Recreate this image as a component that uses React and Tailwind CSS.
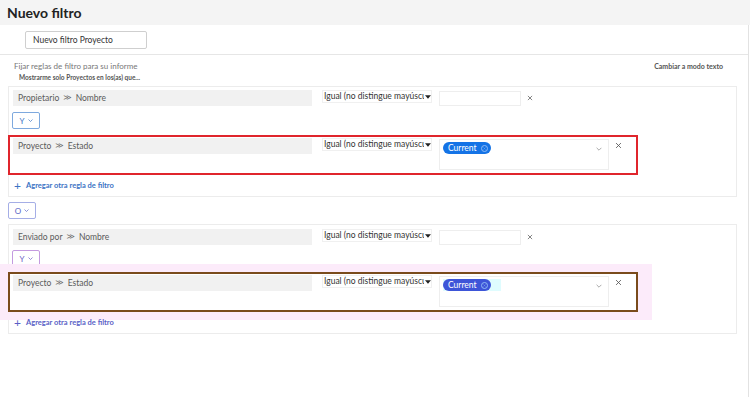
import React from 'react';

const font = { fontFamily: 'Lato, "Open Sans", "Liberation Sans", sans-serif' };

const Chevron = ({ className }) => (
    <svg viewBox="0 0 10 6" className={className} fill="none" stroke="currentColor" strokeWidth="1.4">
        <path d="M1 1l4 4 4-4" />
    </svg>
);

const Cross = ({ className }) => (
    <svg viewBox="0 0 10 10" className={className} fill="none" stroke="currentColor" strokeWidth="1.2">
        <path d="M1.5 1.5l7 7M8.5 1.5l-7 7" />
    </svg>
);

const Field = ({ left, right }) => (
    <div className="w-[299px] h-[16px] bg-[#f1f1f1] flex items-center pl-[5px] text-[8.5px] text-[#5a5a5a] shrink-0">
        <span>{left}</span>
        <span className="mx-[4px] text-[8px] leading-none text-[#666] font-['DejaVu_Sans',sans-serif]">≫</span>
        <span>{right}</span>
    </div>
);

const Operator = () => (
    <div className="ml-[10px] w-[110px] h-[13px] flex items-center bg-white border border-[#f0f0f0] text-[8.5px] text-[#333] shrink-0 pl-[1px]">
        <span className="overflow-hidden whitespace-nowrap w-[101px]">Igual (no distingue mayúsculas/minúsculas)</span>
        <svg viewBox="0 0 10 6" className="w-[6px] h-[4px] ml-[1px]" fill="#222"><path d="M0 0h10L5 6z" /></svg>
    </div>
);

const Chip = ({ tone }) => (
    <div className={`h-[12px] pl-[5px] pr-[3px] rounded-full flex items-center gap-[4px] text-white text-[8.5px] leading-none ${tone}`}>
        <span>Current</span>
        <span className="w-[7px] h-[7px] rounded-full border border-[#8fbaf5] flex items-center justify-center shrink-0">
            <Cross className="w-[3px] h-[3px] text-[#8fbaf5]" />
        </span>
    </div>
);

const SimpleRow = ({ left, right }) => (
    <div className="flex items-start pl-[4px]">
        <Field left={left} right={right} />
        <Operator />
        <div className="ml-[7px] w-[82px] h-[15px] mt-[1px] bg-white border border-[#eeeeee] shrink-0" />
        <Cross className="ml-[6px] mt-[5px] w-[6px] h-[6px] text-[#555]" />
    </div>
);

const MultiRow = ({ frame, chip, chipBg }) => (
    <div className={`-ml-[1px] w-[630px] border-2 flex items-start pl-[3px] ${frame}`}>
        <div className="pt-[1px] pb-[19px] flex items-start bg-white">
            <Field left="Proyecto" right="Estado" />
            <Operator />
        </div>
        <div className="ml-[7px] mt-[2px] mb-[2px] w-[170px] h-[31px] bg-white border border-[#eeeeee] flex items-start pt-[2px] pl-[3px] pr-[6px] shrink-0">
            <div className={`pr-[10px] ${chipBg}`}>
                <Chip tone={chip} />
            </div>
            <Chevron className="ml-auto mt-[5px] w-[6px] h-[4px] text-[#999]" />
        </div>
        <Cross className="ml-[6px] mt-[5px] w-[7px] h-[7px] text-[#555]" />
    </div>
);

const Logic = ({ label, border, text, ml }) => (
    <div className={`${ml} w-[28px] h-[17px] border rounded-[2px] flex items-center justify-center gap-[3px] text-[8px] bg-white ${border} ${text}`}>
        <span>{label}</span>
        <Chevron className="w-[5px] h-[3px]" />
    </div>
);

const AddRule = ({ color }) => (
    <div className={`flex items-center gap-[5px] pl-[5px] h-[16px] text-[7.5px] font-bold ${color}`}>
        <span className="text-[12px] font-normal leading-none">+</span>
        <span>Agregar otra regla de filtro</span>
    </div>
);

export default function App() {
    return (
        <div className="w-[750px] h-[397px] bg-white overflow-hidden" style={font}>
            <header className="h-[25px] bg-[#f4f4f4] flex items-center pl-[7px]">
                <h1 className="text-[14px] font-bold text-[#222]">Nuevo filtro</h1>
            </header>
            <div className="w-[749px] h-[372px] border-r border-[#e2e2e2]">
                <div className="h-[30px] border-b border-[#e6e6e6] pl-[25px] pt-[6px]">
                    <div className="w-[122px] h-[18px] border border-[#cfcfcf] rounded-[2px] flex items-center pl-[7px] text-[8.5px] text-[#333]">
                        Nuevo filtro Proyecto
                    </div>
                </div>
                <div className="pl-[8px] pr-[12px]">
                    <div className="flex justify-between pt-[6px]">
                        <div className="pl-[6px] text-[8px] text-[#777] leading-[10px]">Fijar reglas de filtro para su informe</div>
                        <div className="text-[7px] font-bold text-[#555] pr-[13px] leading-[10px]">Cambiar a modo texto</div>
                    </div>
                    <div className="pl-[11px] text-[6.5px] font-bold text-[#555] leading-[10px] mt-[2px]">Mostrarme solo Proyectos en los(as) que...</div>

                    <div className="mt-[3px] w-[729px] border border-[#ececec] pt-[3px] pb-[2px]">
                        <SimpleRow left="Propietario" right="Nombre" />
                        <div className="pt-[6px] pb-[6px]">
                            <Logic label="Y" ml="ml-[3px]" border="border-[#7ea9de]" text="text-[#3d74c4]" />
                        </div>
                        <MultiRow frame="border-[#e0252c]" chip="bg-[#1473e6]" chipBg="" />
                        <div className="pt-[3px]">
                            <AddRule color="text-[#3b73c4]" />
                        </div>
                    </div>

                    <div className="pt-[5px] pb-[5px]">
                        <Logic label="O" ml="" border="border-[#a5aee6]" text="text-[#5a66c6]" />
                    </div>

                    <div className="w-[729px] border border-[#ececec] pt-[4px] pb-[2px]">
                        <SimpleRow left="Enviado por" right="Nombre" />
                        <div className="pt-[5px] pb-[5px]">
                            <Logic label="Y" ml="ml-[3px]" border="border-[#c49ae0]" text="text-[#6a5ac6]" />
                        </div>
                        <MultiRow frame="border-[#7a4b1c] shadow-[6px_0_0_8px_#fcebfa,-2px_0_0_8px_#fcebfa]" chip="bg-[#3d55d8]" chipBg="bg-[#dffcfe]" />
                        <div className="pt-[3px]">
                            <AddRule color="text-[#5a5fc6]" />
                        </div>
                    </div>
                </div>
            </div>
        </div>
    );
}
